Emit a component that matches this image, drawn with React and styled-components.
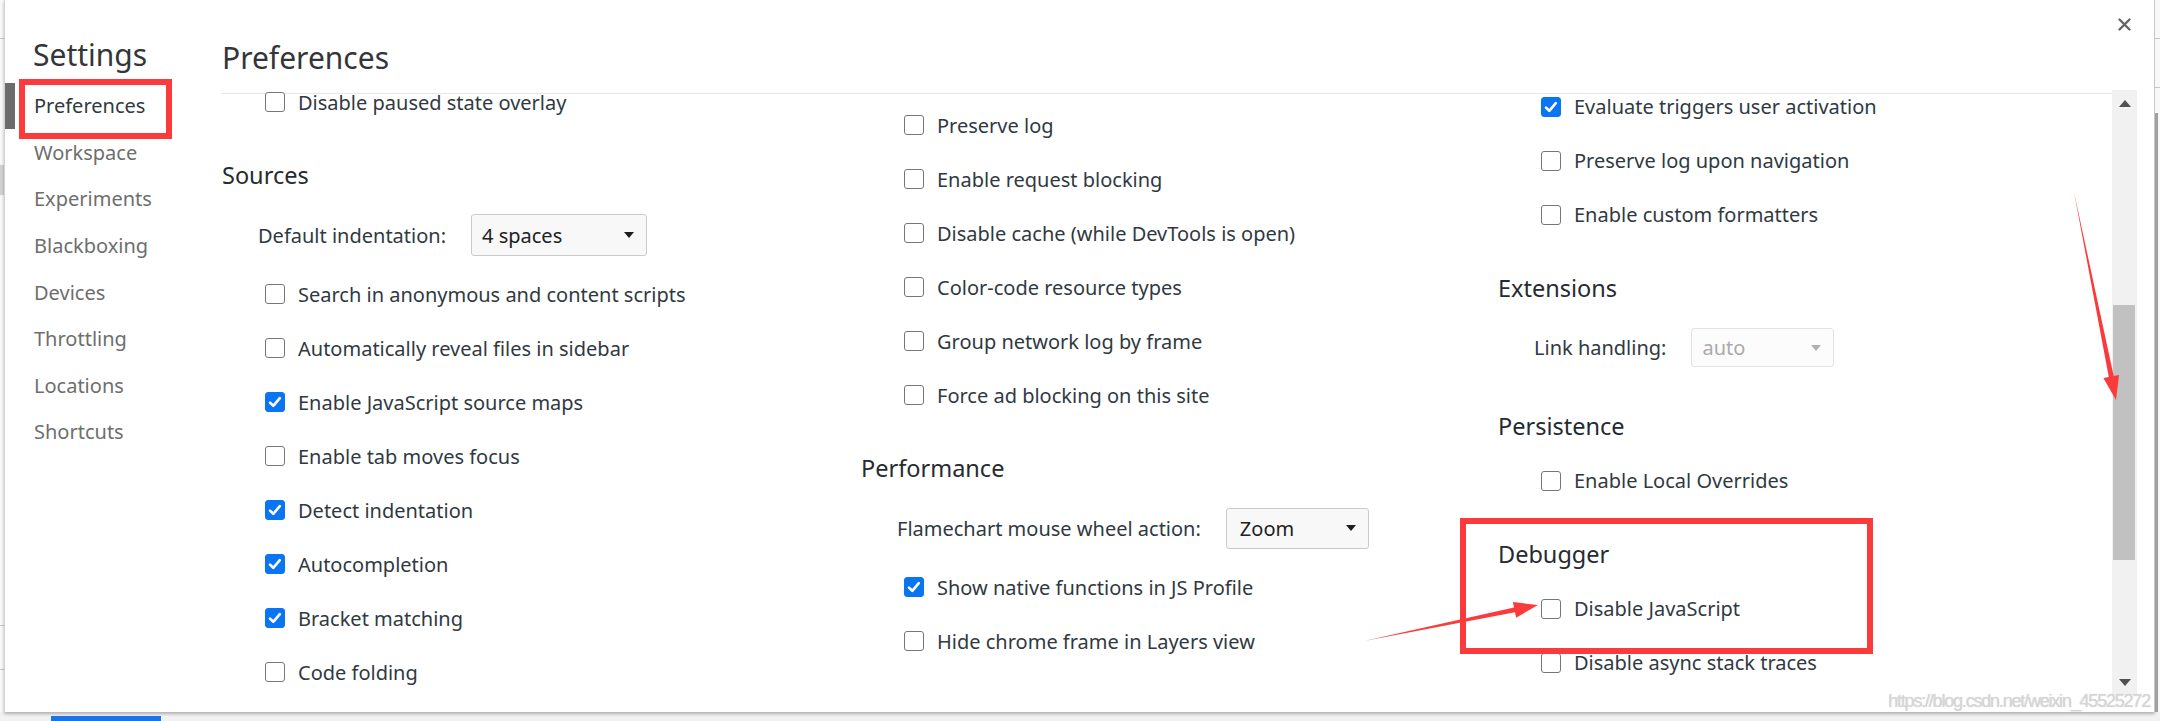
import React from 'react';
import styled, { createGlobalStyle } from 'styled-components';

const GlobalStyle = createGlobalStyle`
  html, body { margin: 0; padding: 0; background: #f2f2f2; }
  body { font-family: "Noto Sans", "Open Sans", sans-serif; }
  *, *::before, *::after { box-sizing: border-box; }
`;

const Page = styled.div`
  position: relative;
  width: 2160px;
  height: 721px;
  overflow: hidden;
  display: flex;
  flex-direction: column;
  background: #f2f2f2;
`;

const Frame = styled.div`
  display: flex;
  height: 712px;
  flex: none;
`;

const LeftStrip = styled.div`
  width: 4px;
  flex: none;
  background:
    linear-gradient(#c6c6c6, #c6c6c6) 0 38px / 100% 1px no-repeat,
    linear-gradient(#d2d2d2, #d2d2d2) 0 165px / 100% 30px no-repeat,
    linear-gradient(#c6c6c6, #c6c6c6) 0 625px / 100% 1px no-repeat,
    linear-gradient(#c6c6c6, #c6c6c6) 0 669px / 100% 1px no-repeat,
    #f8f8f8;
`;

const RightStrip = styled.div`
  width: 5px;
  flex: none;
  background:
    linear-gradient(#c6c6c6, #c6c6c6) 0 38px / 100% 1px no-repeat,
    linear-gradient(#c6c6c6, #c6c6c6) 0 87px / 100% 1px no-repeat,
    linear-gradient(#a0a0a0, #a0a0a0) 0 113px / 3px 600px no-repeat,
    #f8f8f8;
`;

const Dialog = styled.div`
  flex: 1;
  display: flex;
  background: #ffffff;
  border-left: 1px solid #d4d4d4;
  border-right: 1px solid #c8c8c8;
  box-shadow: 0 2px 3px rgba(0, 0, 0, 0.28);
`;

const Sidebar = styled.nav`
  width: 216px;
  flex: none;
  padding-top: 35px;
  display: flex;
  flex-direction: column;
`;

const SettingsTitle = styled.div`
  padding-left: 28px;
  font-size: 30px;
  line-height: 40px;
  color: #333639;
  margin-bottom: 7.5px;
`;

const NavItem = styled.div`
  height: 46.6px;
  flex: none;
  display: flex;
  align-items: center;
  border-left: 10px solid ${p => (p.$active ? '#6b6b6b' : 'transparent')};
  padding-left: 19px;
  font-size: 20px;
  color: ${p => (p.$active ? '#303942' : '#6e6e6e')};
`;

const Main = styled.div`
  flex: 1;
  display: grid;
  grid-template-columns: 1891px 25px 1fr;
  grid-template-rows: 90px 4px 1fr 17px;
`;

const HeaderTitle = styled.h1`
  grid-area: 1 / 1 / 3 / 2;
  margin: 0;
  padding: 38px 0 0 1px;
  font-size: 30px;
  font-weight: 400;
  line-height: 40px;
  color: #333639;
  border-bottom: 1px solid #e6e6e6;
`;

const CloseCell = styled.div`
  grid-area: 1 / 2 / 2 / 4;
  padding-top: 12px;
`;

const CloseButton = styled.div`
  width: 24px;
  height: 24px;
  display: flex;
  align-items: center;
  justify-content: center;
`;

const Content = styled.div`
  grid-area: 2 / 1 / 4 / 2;
  overflow: hidden;
  display: flex;
  align-items: flex-start;
  padding-left: 1px;
`;

const Column = styled.div`
  width: ${p => p.$width};
  flex: ${p => (p.$grow ? '1' : 'none')};
  margin-top: ${p => p.$offset}px;
  display: flex;
  flex-direction: column;
`;

const SectionTitle = styled.div`
  height: 74px;
  flex: none;
  padding-top: 31px;
  font-size: 23.5px;
  line-height: 30px;
  color: #262b30;
`;

const CheckRow = styled.label`
  height: 54px;
  flex: none;
  display: flex;
  align-items: center;
  gap: 13px;
  padding-left: 43px;
  font-size: 20px;
  color: #303942;
  white-space: nowrap;
`;

const Box = styled.span`
  width: 20px;
  height: 20px;
  flex: none;
  border-radius: 3px;
  display: flex;
  align-items: center;
  justify-content: center;
  background: ${p => (p.$checked ? '#0a75f3' : '#ffffff')};
  border: 1px solid ${p => (p.$checked ? '#0a75f3' : '#767676')};
`;

const SelectRow = styled.div`
  height: 64px;
  flex: none;
  display: flex;
  align-items: center;
  gap: 25px;
  padding-left: 36px;
  font-size: 20px;
  color: #303942;
  white-space: nowrap;
`;

const SelectBox = styled.div`
  width: ${p => p.$width}px;
  height: ${p => p.$height}px;
  display: flex;
  align-items: center;
  justify-content: space-between;
  padding: 0 12px 0 ${p => p.$pad}px;
  background: ${p => (p.$disabled ? '#fcfcfc' : '#f8f8f8')};
  border: 1px solid ${p => (p.$disabled ? '#e3e3e3' : '#cbcbcb')};
  border-radius: 3px;
  color: ${p => (p.$disabled ? '#aaaaaa' : '#222222')};
`;

const Scrollbar = styled.div`
  grid-area: 2 / 2 / 4 / 3;
  background: #f1f1f1;
  display: flex;
  flex-direction: column;
`;

const ScrollButton = styled.div`
  height: 26px;
  flex: none;
  display: flex;
  align-items: center;
  justify-content: center;
`;

const Track = styled.div`
  flex: 1;
  padding: 189px 2px 0 1px;
`;

const Thumb = styled.div`
  height: 255px;
  background: #c1c1c1;
`;

const BottomStrip = styled.div`
  flex: 1;
  padding: 4px 0 0 51px;
`;

const TabUnderline = styled.div`
  width: 110px;
  height: 5px;
  background: #1a73e8;
`;

const Watermark = styled.div`
  position: absolute;
  right: 10px;
  bottom: 9px;
  font-family: "Liberation Sans", Arial, sans-serif;
  font-size: 18px;
  letter-spacing: -1.2px;
  line-height: 22px;
  color: #d6d6d6;
  text-shadow: 0 0 1px rgba(120, 120, 120, 0.35);
  pointer-events: none;
`;

const Annotations = styled.svg`
  position: absolute;
  left: 0;
  top: 0;
  pointer-events: none;
`;

const Check = () => (
  <svg width="16" height="16" viewBox="0 0 16 16">
    <path d="M3 8.6 L6.3 11.8 L12.8 4.2" fill="none" stroke="#fff" strokeWidth="2.6" strokeLinecap="round" strokeLinejoin="round" />
  </svg>
);

const Caret = ({ color }) => (
  <svg width="10" height="6" viewBox="0 0 10 6">
    <path d="M0 0 H10 L5 6 Z" fill={color} />
  </svg>
);

const Checkbox = ({ label, checked }) => (
  <CheckRow>
    <Box $checked={checked}>{checked && <Check />}</Box>
    {label}
  </CheckRow>
);

const Select = ({ label, value, width, height = 41, pad = 10, disabled }) => (
  <SelectRow>
    <span>{label}</span>
    <SelectBox $width={width} $height={height} $pad={pad} $disabled={disabled}>
      <span>{value}</span>
      <Caret color={disabled ? '#b0b0b0' : '#1e1e1e'} />
    </SelectBox>
  </SelectRow>
);

const renderItem = (it, i) => {
  if (it.h) return <SectionTitle key={i}>{it.h}</SectionTitle>;
  if (it.sel) return <Select key={i} label={it.sel} value={it.value} width={it.width} height={it.height} pad={it.pad} disabled={it.disabled} />;
  return <Checkbox key={i} label={it.cb} checked={it.on} />;
};

const col1 = [
  { cb: 'Disable paused state overlay' },
  { h: 'Sources' },
  { sel: 'Default indentation:', value: '4 spaces', width: 176, height: 42 },
  { cb: 'Search in anonymous and content scripts' },
  { cb: 'Automatically reveal files in sidebar' },
  { cb: 'Enable JavaScript source maps', on: true },
  { cb: 'Enable tab moves focus' },
  { cb: 'Detect indentation', on: true },
  { cb: 'Autocompletion', on: true },
  { cb: 'Bracket matching', on: true },
  { cb: 'Code folding' },
];

const col2 = [
  { cb: 'Preserve log' },
  { cb: 'Enable request blocking' },
  { cb: 'Disable cache (while DevTools is open)' },
  { cb: 'Color-code resource types' },
  { cb: 'Group network log by frame' },
  { cb: 'Force ad blocking on this site' },
  { h: 'Performance' },
  { sel: 'Flamechart mouse wheel action:', value: 'Zoom', width: 143, pad: 13 },
  { cb: 'Show native functions in JS Profile', on: true },
  { cb: 'Hide chrome frame in Layers view' },
];

const col3 = [
  { cb: 'Evaluate triggers user activation', on: true },
  { cb: 'Preserve log upon navigation' },
  { cb: 'Enable custom formatters' },
  { h: 'Extensions' },
  { sel: 'Link handling:', value: 'auto', width: 143, height: 39, disabled: true },
  { h: 'Persistence' },
  { cb: 'Enable Local Overrides' },
  { h: 'Debugger' },
  { cb: 'Disable JavaScript' },
  { cb: 'Disable async stack traces' },
];

const navItems = ['Preferences', 'Workspace', 'Experiments', 'Blackboxing', 'Devices', 'Throttling', 'Locations', 'Shortcuts'];

export default function App() {
  return (
    <Page>
      <GlobalStyle />
      <Frame>
        <LeftStrip />
        <Dialog>
          <Sidebar>
            <SettingsTitle>Settings</SettingsTitle>
            {navItems.map((n, i) => (
              <NavItem key={n} $active={i === 0}>{n}</NavItem>
            ))}
          </Sidebar>
          <Main>
            <HeaderTitle>Preferences</HeaderTitle>
            <CloseCell>
              <CloseButton>
                <svg width="13" height="13" viewBox="0 0 13 13">
                  <path d="M1.5 1.5 L11.5 11.5 M11.5 1.5 L1.5 11.5" stroke="#666" strokeWidth="2.4" strokeLinecap="round" />
                </svg>
              </CloseButton>
            </CloseCell>
            <Content>
              <Column $width="639px" $offset={-15}>{col1.map(renderItem)}</Column>
              <Column $width="637px" $offset={8}>{col2.map(renderItem)}</Column>
              <Column $grow $offset={-10.5}>{col3.map(renderItem)}</Column>
            </Content>
            <Scrollbar>
              <ScrollButton>
                <svg width="12" height="7" viewBox="0 0 12 7"><path d="M0 7 L6 0 L12 7 Z" fill="#505050" /></svg>
              </ScrollButton>
              <Track><Thumb /></Track>
              <ScrollButton>
                <svg width="12" height="7" viewBox="0 0 12 7"><path d="M0 0 L12 0 L6 7 Z" fill="#505050" /></svg>
              </ScrollButton>
            </Scrollbar>
          </Main>
        </Dialog>
        <RightStrip />
      </Frame>
      <BottomStrip><TabUnderline /></BottomStrip>
      <Watermark>https://blog.csdn.net/weixin_45525272</Watermark>
      <Annotations width="2160" height="721" viewBox="0 0 2160 721">
        <rect x="22" y="82" width="147" height="54" fill="none" stroke="#fb3b3b" strokeWidth="6" />
        <rect x="1463" y="521" width="407" height="130" fill="none" stroke="#fb3b3b" strokeWidth="6" />
        <polygon points="1364,641 1514,607.5 1512.9,602.1 1538,605 1516.1,617.7 1515,612.3" fill="#fb3b3b" />
        <polygon points="2074,192 2108.8,377 2103.4,378.1 2116,400 2119.1,374.9 2113.7,376" fill="#fb3b3b" />
      </Annotations>
    </Page>
  );
}
